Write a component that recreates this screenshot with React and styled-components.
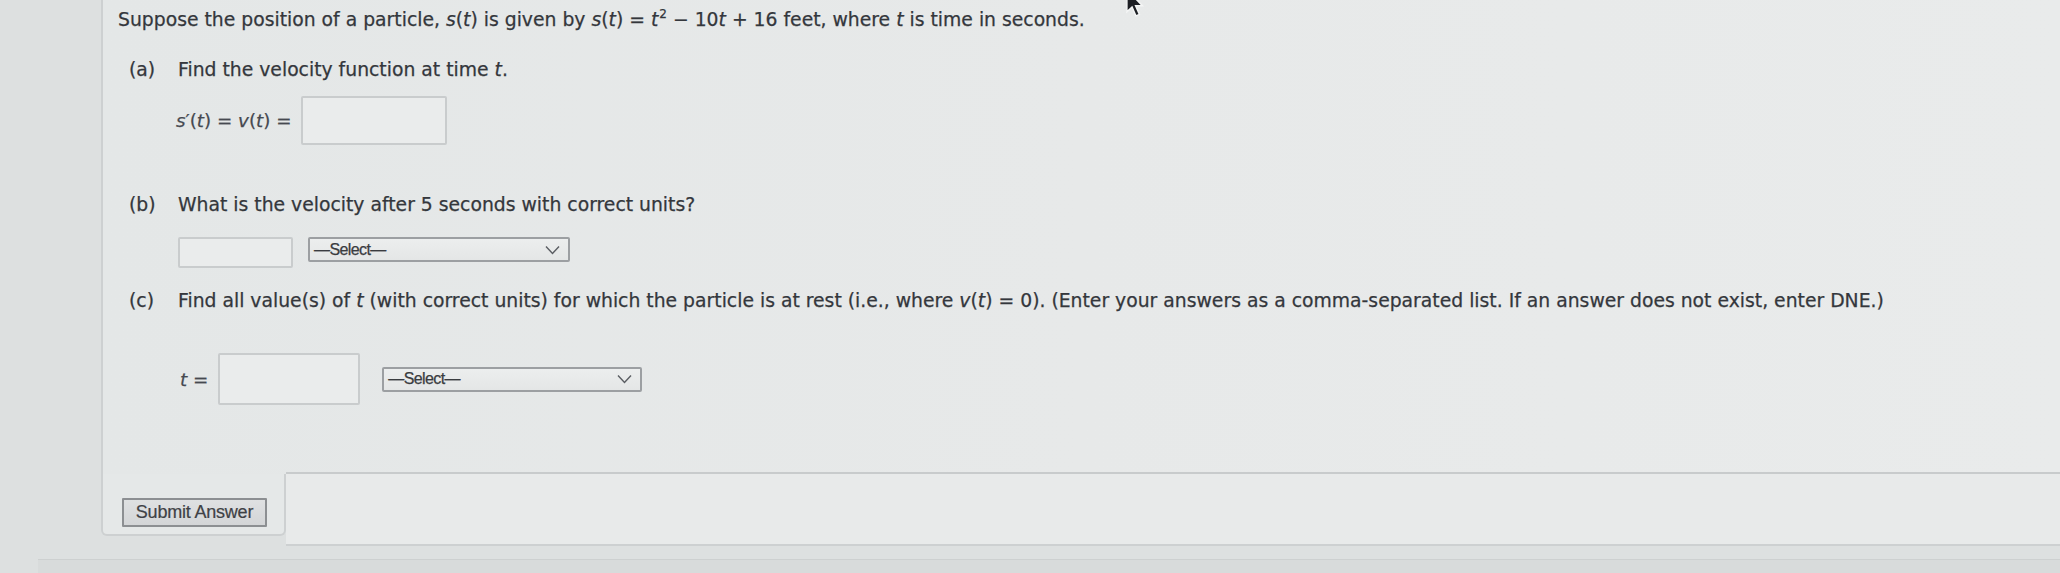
import React from 'react';
import styled, { createGlobalStyle } from 'styled-components';

const GlobalStyle = createGlobalStyle`
  html, body {
    margin: 0;
    padding: 0;
    background: #dde0e0;
  }
  body {
    width: 2060px;
    height: 573px;
    overflow: hidden;
  }
`;

const Page = styled.div`
  position: relative;
  display: flex;
  flex-direction: column;
  width: 2060px;
  height: 573px;
  overflow: hidden;
  font-family: 'DejaVu Sans', Verdana, sans-serif;
  color: #34373c;
  -webkit-text-stroke: 0.25px currentColor;
`;

const Panel = styled.div`
  margin-left: 101px;
  height: 474px;
  box-sizing: border-box;
  padding: 9px 0 0 15px;
  border-left: 2px solid #cdd0d1;
  background: linear-gradient(90deg, #e4e7e7 0%, #e7e9e9 50%, #e9ebeb 100%);
`;

const Intro = styled.p`
  margin: 0;
  font-size: 18.8px;
  line-height: 22px;
`;

const Part = styled.div`
  margin-top: ${(p) => p.$top}px;
  margin-left: 11px;
`;

const PartHead = styled.div`
  display: flex;
  font-size: 18.8px;
  line-height: 22px;
`;

const PartLetter = styled.span`
  width: 49px;
  flex: none;
`;

const AnswerRow = styled.div`
  display: flex;
  align-items: ${(p) => p.$align || 'center'};
  margin-top: ${(p) => p.$top}px;
  margin-left: ${(p) => p.$left}px;
  gap: ${(p) => p.$gap}px;
  font-size: 18.3px;
`;

const Var = styled.i`
  font-style: oblique;
`;

const Sup = styled.sup`
  font-size: 12px;
  line-height: 0;
  vertical-align: 8px;
  margin-left: 1px;
`;

const Expr = styled.span`
  white-space: pre;
  color: #464950;
`;

const Box = styled.div`
  width: ${(p) => p.$w}px;
  height: ${(p) => p.$h}px;
  margin-left: ${(p) => p.$ml || 0}px;
  box-sizing: border-box;
  border: 2px solid #c9cccd;
  border-radius: 2px;
  background: #eaecec;
`;

const Select = styled.div`
  display: flex;
  align-items: center;
  justify-content: space-between;
  width: ${(p) => p.$w}px;
  height: ${(p) => p.$h}px;
  margin-left: ${(p) => p.$ml || 0}px;
  box-sizing: border-box;
  padding: 0 8px 0 4px;
  border: 2px solid #9c9fa2;
  border-radius: 2px;
  background: linear-gradient(180deg, #eceeee 0%, #e4e6e6 100%);
  font-family: 'Liberation Sans', Arial, sans-serif;
  font-size: 16px;
  letter-spacing: -0.6px;
  color: #3a3c40;
`;

const Chevron = () => (
  <svg width="15" height="10" viewBox="0 0 15 10" fill="none">
    <path d="M1 1.5 L7.5 8.5 L14 1.5" stroke="#5a5d62" strokeWidth="1.4" />
  </svg>
);

const BottomRow = styled.div`
  display: flex;
  align-items: flex-start;
`;

const Tab = styled.div`
  margin-left: 101px;
  width: 185px;
  height: 62px;
  flex: none;
  box-sizing: border-box;
  padding: 24px 0 0 19px;
  border: 2px solid #cdd0d1;
  border-top: none;
  border-radius: 0 0 6px 6px;
  background: #e5e8e8;
`;

const SubmitButton = styled.button`
  width: 145px;
  height: 29px;
  padding: 0;
  box-sizing: border-box;
  border: 2px solid #8c8f92;
  border-radius: 1px;
  background: linear-gradient(180deg, #dfe1e2 0%, #d3d5d7 100%);
  font-family: 'Liberation Sans', Arial, sans-serif;
  font-size: 18px;
  letter-spacing: -0.2px;
  color: #3e4145;
  -webkit-text-stroke: 0.2px currentColor;
`;

const Strip = styled.div`
  flex: 1;
  height: 74px;
  box-sizing: border-box;
  margin-top: -2px;
  border-top: 2px solid #c8cbcc;
  border-bottom: 2px solid #cdd0d1;
  background: #e8eaea;
`;

const Footer = styled.div`
  margin: 13px 0 0 38px;
  flex: 1;
  border-top: 1px solid #cdd0d0;
  background: #d8dbdb;
`;

const Cursor = styled.svg`
  position: absolute;
  left: 1126px;
  top: -11px;
`;

export default function App() {
  return (
    <Page>
      <GlobalStyle />
      <Panel>
        <Intro>
          Suppose the position of a particle, <Var>s</Var>(<Var>t</Var>) is given by{' '}
          <Var>s</Var>(<Var>t</Var>) = <Var>t</Var>
          <Sup>2</Sup> − 10<Var>t</Var> + 16 feet, where <Var>t</Var> is time in seconds.
        </Intro>

        <Part $top={28}>
          <PartHead>
            <PartLetter>(a)</PartLetter>
            <span>
              Find the velocity function at time <Var>t</Var>.
            </span>
          </PartHead>
          <AnswerRow $top={15} $left={47} $gap={10}>
            <Expr>
              <Var>s</Var>′(<Var>t</Var>) = <Var>v</Var>(<Var>t</Var>) =
            </Expr>
            <Box $w={146} $h={49} />
          </AnswerRow>
        </Part>

        <Part $top={49}>
          <PartHead>
            <PartLetter>(b)</PartLetter>
            <span>What is the velocity after 5 seconds with correct units?</span>
          </PartHead>
          <AnswerRow $top={21} $left={49} $gap={15} $align="flex-start">
            <Box $w={115} $h={31} />
            <Select $w={262} $h={25}>
              <span>—Select—</span>
              <Chevron />
            </Select>
          </AnswerRow>
        </Part>

        <Part $top={22}>
          <PartHead>
            <PartLetter>(c)</PartLetter>
            <span>
              Find all value(s) of <Var>t</Var> (with correct units) for which the particle is at rest
              (i.e., where <Var>v</Var>(<Var>t</Var>) = 0). (Enter your answers as a comma-separated
              list. If an answer does not exist, enter DNE.)
            </span>
          </PartHead>
          <AnswerRow $top={41} $left={51} $gap={10}>
            <Expr>
              <Var>t</Var> =
            </Expr>
            <Box $w={142} $h={52} />
            <Select $w={260} $h={25} $ml={12}>
              <span>—Select—</span>
              <Chevron />
            </Select>
          </AnswerRow>
        </Part>
      </Panel>

      <BottomRow>
        <Tab>
          <SubmitButton type="button">Submit Answer</SubmitButton>
        </Tab>
        <Strip />
      </BottomRow>
      <Footer />

      <Cursor width="18" height="28" viewBox="0 0 12 19">
        <path
          d="M0.5 0.5 L0.5 15.5 L4 12.2 L6.6 18.2 L9 17.2 L6.4 11.3 L11 11.3 Z"
          fill="#1d1f24"
          stroke="#f4f5f5"
          strokeWidth="1"
        />
      </Cursor>
    </Page>
  );
}
